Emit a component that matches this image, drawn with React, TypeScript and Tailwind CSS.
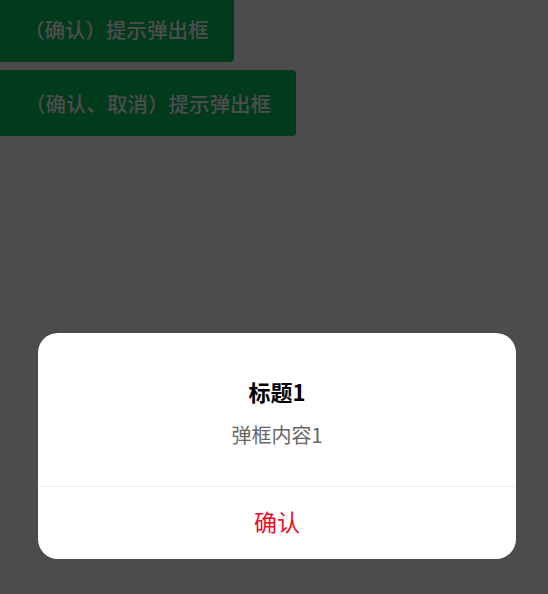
import React from "react";

export default function App() {
  const font = { fontFamily: '"Noto Sans CJK SC", "Noto Sans", sans-serif' };
  return (
    <div className="relative h-[594px] w-[548px] overflow-hidden bg-white" style={font}>
      <div className="-mt-[4px] flex flex-col items-start gap-[8px]">
        <button className="flex h-[66px] items-center rounded-r-[4px] bg-[#07c160] pl-[24px] pr-[25px] text-[20.5px] font-medium leading-none text-white">
          （确认）提示弹出框
        </button>
        <button className="flex h-[66px] items-center rounded-r-[4px] bg-[#07c160] pl-[25px] pr-[25px] text-[20.5px] font-medium leading-none text-white">
          （确认、取消）提示弹出框
        </button>
      </div>

      <div className="absolute inset-0 flex items-end justify-center bg-black/70 pb-[35px] pl-[6px]">
        <div className="flex w-[478px] flex-col overflow-hidden rounded-[20px] bg-white">
          <div className="flex flex-col items-center pb-[37px] pt-[43px]">
            <div className="text-[22px] font-bold leading-[30px] text-black">标题1</div>
            <div className="mt-[15px] text-[20px] leading-[28px] text-[#666666]">弹框内容1</div>
          </div>
          <div className="h-px bg-[#eeeeee]" />
          <div className="flex h-[72px] items-center justify-center pb-[4px] text-[23px] leading-none text-[#ee0a24]">
            确认
          </div>
        </div>
      </div>
    </div>
  );
}
